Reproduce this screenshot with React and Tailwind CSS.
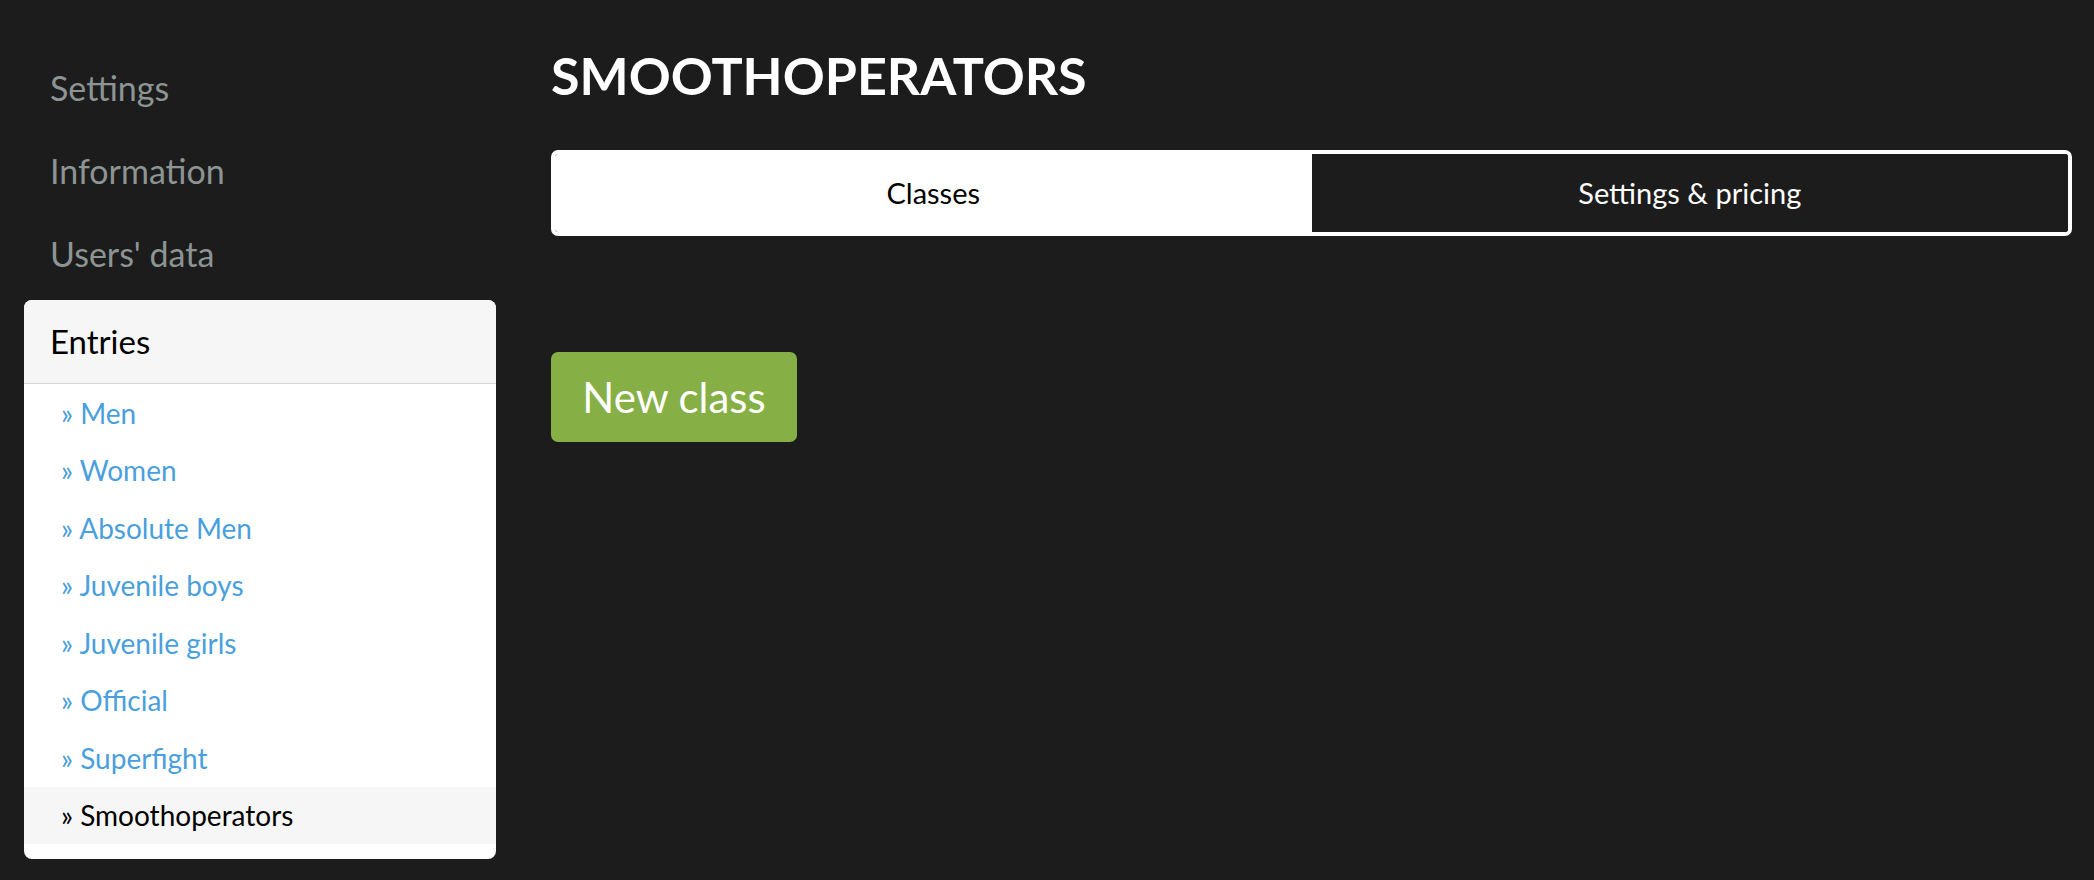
import { useState } from "react";

const entries = [
  "Men",
  "Women",
  "Absolute Men",
  "Juvenile boys",
  "Juvenile girls",
  "Official",
  "Superfight",
  "Smoothoperators",
];

export default function App() {
  const [active, setActive] = useState("Smoothoperators");
  const [tab, setTab] = useState("classes");

  return (
    <div
      className="min-h-screen bg-[#1c1c1c] flex"
      style={{ fontFamily: "Lato, 'Open Sans', sans-serif" }}
    >
      {/* Sidebar */}
      <aside className="w-[472px] ml-[24px] pt-[46px] shrink-0">
        <nav className="flex flex-col">
          {["Settings", "Information", "Users' data"].map((item) => (
            <a
              key={item}
              href="#"
              className="h-[83px] flex items-center pl-[26px] text-[34px] text-[#8c9494]"
            >
              {item}
            </a>
          ))}
        </nav>

        <div className="mt-[5px] bg-white rounded-[8px] overflow-hidden pb-[15px]">
          <div className="h-[84px] flex items-center px-[26px] bg-[#f6f6f6] border-b border-[#d4d4da] text-[33px] text-black">
            Entries
          </div>
          <ul>
            {entries.map((name) => (
              <li key={name}>
                <a
                  href="#"
                  onClick={(e) => {
                    e.preventDefault();
                    setActive(name);
                  }}
                  className={
                    "h-[57.5px] flex items-center pl-[37px] text-[28px] " +
                    (active === name
                      ? "bg-[#f6f6f6] text-black"
                      : "text-[#4a9fdc]")
                  }
                >
                  » {name}
                </a>
              </li>
            ))}
          </ul>
        </div>
      </aside>

      {/* Main */}
      <main className="flex-1 ml-[55px] mr-[22px] pt-[45px]">
        <h1 className="h-[60px] flex items-center text-[52px] font-bold text-white leading-none">
          SMOOTHOPERATORS
        </h1>

        <div className="mt-[45px] h-[86px] flex rounded-[7px] border-4 border-white overflow-hidden">
          <button
            onClick={() => setTab("classes")}
            className={
              "flex-1 flex items-center justify-center text-[29px] " +
              (tab === "classes" ? "bg-white text-black" : "bg-[#1c1c1c] text-white")
            }
          >
            Classes
          </button>
          <button
            onClick={() => setTab("settings")}
            className={
              "flex-1 flex items-center justify-center text-[29px] " +
              (tab === "settings" ? "bg-white text-black" : "bg-[#1c1c1c] text-white")
            }
          >
            Settings &amp; pricing
          </button>
        </div>

        <button className="mt-[116px] w-[246px] h-[90px] rounded-[7px] bg-[#86b046] text-white text-[42px] flex items-center justify-center">
          New class
        </button>
      </main>
    </div>
  );
}
